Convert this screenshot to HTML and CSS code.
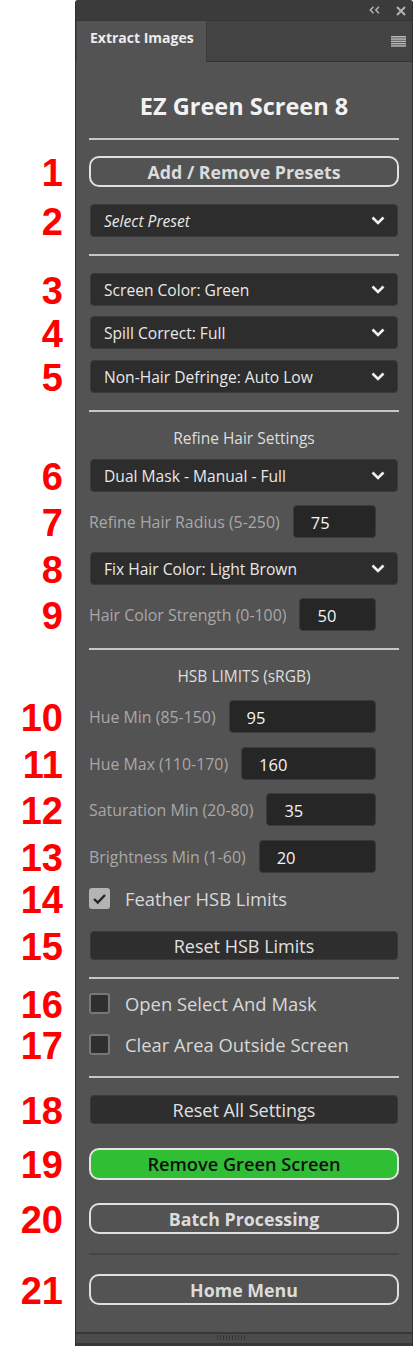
FILE: index.html
```html
<!DOCTYPE html>
<html>
<head>
<meta charset="utf-8">
<title>EZ Green Screen 8</title>
<link rel="stylesheet" href="styles.css">
</head>
<body>
<div class="panel">
  <div class="topbar">
    <svg class="collapse" width="11" height="8" viewBox="0 0 11 8"><path d="M4.5 0.8 L1.3 4 L4.5 7.2 M10 0.8 L6.8 4 L10 7.2" fill="none" stroke="#b4b4b4" stroke-width="1.5"/></svg>
    <svg class="close" width="10" height="10" viewBox="0 0 10 10"><path d="M1 1 L9 9 M9 1 L1 9" stroke="#b4b4b4" stroke-width="2"/></svg>
  </div>
  <div class="tabbar">
    <div class="tab">Extract Images</div>
    <div class="tabrest">
      <svg class="menu" width="15" height="11" viewBox="0 0 15 11"><rect x="0" y="0" width="15" height="1.5" fill="#b8b8b8"/><rect x="0" y="2.3" width="15" height="1.5" fill="#b8b8b8"/><rect x="0" y="4.6" width="15" height="1.5" fill="#b8b8b8"/><rect x="0" y="6.9" width="15" height="1.5" fill="#b8b8b8"/><rect x="0" y="9.2" width="15" height="1.5" fill="#b8b8b8"/></svg>
    </div>
  </div>
  <div class="content">
    <div class="title">EZ Green Screen 8</div>
    <div class="sep m17"></div>
    <div class="row m16"><span class="num">1</span><div class="pill">Add / Remove Presets</div></div>
    <div class="row m17"><span class="num">2</span><div class="dropdown italic"><span>Select Preset</span><svg class="chev" width="14" height="9" viewBox="0 0 14 9"><path d="M1.5 1.5 L7 7 L12.5 1.5" fill="none" stroke="#f2f2f2" stroke-width="2.6"/></svg></div></div>
    <div class="sep m17"></div>
    <div class="row m17"><span class="num">3</span><div class="dropdown"><span>Screen Color: Green</span><svg class="chev" width="14" height="9" viewBox="0 0 14 9"><path d="M1.5 1.5 L7 7 L12.5 1.5" fill="none" stroke="#f2f2f2" stroke-width="2.6"/></svg></div></div>
    <div class="row m10"><span class="num">4</span><div class="dropdown"><span>Spill Correct: Full</span><svg class="chev" width="14" height="9" viewBox="0 0 14 9"><path d="M1.5 1.5 L7 7 L12.5 1.5" fill="none" stroke="#f2f2f2" stroke-width="2.6"/></svg></div></div>
    <div class="row m11"><span class="num">5</span><div class="dropdown"><span>Non-Hair Defringe: Auto Low</span><svg class="chev" width="14" height="9" viewBox="0 0 14 9"><path d="M1.5 1.5 L7 7 L12.5 1.5" fill="none" stroke="#f2f2f2" stroke-width="2.6"/></svg></div></div>
    <div class="sep m17"></div>
    <div class="heading m16">Refine Hair Settings</div>
    <div class="row m11"><span class="num">6</span><div class="dropdown"><span>Dual Mask - Manual - Full</span><svg class="chev" width="14" height="9" viewBox="0 0 14 9"><path d="M1.5 1.5 L7 7 L12.5 1.5" fill="none" stroke="#f2f2f2" stroke-width="2.6"/></svg></div></div>
    <div class="row m13"><span class="num">7</span><span class="label">Refine Hair Radius (5-250)</span><div class="field">75</div></div>
    <div class="row m14"><span class="num">8</span><div class="dropdown"><span>Fix Hair Color: Light Brown</span><svg class="chev" width="14" height="9" viewBox="0 0 14 9"><path d="M1.5 1.5 L7 7 L12.5 1.5" fill="none" stroke="#f2f2f2" stroke-width="2.6"/></svg></div></div>
    <div class="row m13"><span class="num">9</span><span class="label">Hair Color Strength (0-100)</span><div class="field">50</div></div>
    <div class="sep m17"></div>
    <div class="heading m16">HSB LIMITS (sRGB)</div>
    <div class="row m14"><span class="num">10</span><span class="label">Hue Min (85-150)</span><div class="field">95</div></div>
    <div class="row m14"><span class="num">11</span><span class="label">Hue Max (110-170)</span><div class="field">160</div></div>
    <div class="row m13"><span class="num">12</span><span class="label">Saturation Min (20-80)</span><div class="field">35</div></div>
    <div class="row m14"><span class="num">13</span><span class="label">Brightness Min (1-60)</span><div class="field">20</div></div>
    <div class="row check-row m15"><span class="num">14</span><span class="box checked"><svg width="15" height="12" viewBox="0 0 15 12"><path d="M2 6 L5.8 9.6 L13 2" fill="none" stroke="#262626" stroke-width="2.4"/></svg></span><span class="check-label">Feather HSB Limits</span></div>
    <div class="row m22"><span class="num">15</span><div class="flat">Reset HSB Limits</div></div>
    <div class="sep m17"></div>
    <div class="row check-row m14"><span class="num">16</span><span class="box"></span><span class="check-label">Open Select And Mask</span></div>
    <div class="row check-row m20"><span class="num">17</span><span class="box"></span><span class="check-label">Clear Area Outside Screen</span></div>
    <div class="sep m21"></div>
    <div class="row m17"><span class="num">18</span><div class="flat">Reset All Settings</div></div>
    <div class="row m24"><span class="num">19</span><div class="pill green">Remove Green Screen</div></div>
    <div class="row m23"><span class="num">20</span><div class="pill">Batch Processing</div></div>
    <div class="sep dark m19"></div>
    <div class="row m19"><span class="num">21</span><div class="pill">Home Menu</div></div>
  </div>
  <div class="footer"><div class="grip"></div></div>
</div>
</body>
</html>
```

FILE: styles.css
```css
* { box-sizing: border-box; }
body {
  margin: 0;
  background: #ffffff;
  font-family: "Open Sans", "Noto Sans", sans-serif;
}
.panel {
  margin-left: 75px;
  width: 338px;
  height: 1346px;
  background: #535353;
  border-left: 1px solid #303030;
  border-right: 1px solid #303030;
  border-radius: 3px 3px 0 0;
  display: flex;
  flex-direction: column;
}
.topbar {
  height: 20px;
  flex: none;
  background: #3b3b3b;
  border-radius: 3px 3px 0 0;
  display: flex;
  justify-content: flex-end;
  align-items: center;
  gap: 16px;
  padding-right: 6px;
}
.close { margin-top: 2px; }
.tabbar {
  height: 42px;
  flex: none;
  display: flex;
  background: #434343;
  border-top: 1px solid #363636;
}
.tab {
  width: 130px;
  margin-left: 1px;
  background: #535353;
  color: #ececec;
  font-weight: 700;
  font-size: 14px;
  line-height: 18px;
  padding: 8px 0 0 13px;
  border-right: 1px solid #3a3a3a;
}
.tabrest {
  flex: 1;
  border-bottom: 1px solid #333333;
  display: flex;
  justify-content: flex-end;
  align-items: flex-start;
  padding: 15px 6px 0 0;
}
.content {
  flex: 1;
  padding: 0 13px;
  display: flex;
  flex-direction: column;
}
.title {
  margin-top: 29px;
  height: 30px;
  line-height: 30px;
  text-align: center;
  color: #f2f2f2;
  font-weight: 700;
  font-size: 23.5px;
}
.sep { height: 2px; background: #c6c6c6; flex: none; }
.sep.dark { background: #464646; }
.m10 { margin-top: 10px; }
.m11 { margin-top: 11px; }
.m13 { margin-top: 13px; }
.m14 { margin-top: 14px; }
.m15 { margin-top: 15px; }
.m16 { margin-top: 16px; }
.m17 { margin-top: 17px; }
.m19 { margin-top: 19px; }
.m20 { margin-top: 20px; }
.m21 { margin-top: 21px; }
.m22 { margin-top: 22px; }
.m23 { margin-top: 23px; }
.m24 { margin-top: 24px; }
.row {
  display: flex;
  align-items: center;
  flex: none;
}
.num {
  flex: none;
  width: 63px;
  height: 20px;
  margin-left: -89px;
  margin-right: 26px;
  text-align: right;
  color: #ff0000;
  font-family: "Liberation Sans", Arial, sans-serif;
  font-weight: 700;
  font-size: 38px;
  line-height: 22px;
}
.pill {
  flex: 1;
  height: 31px;
  border: 2px solid #e0e0e0;
  border-radius: 10px;
  color: #dcdcdc;
  font-weight: 700;
  font-size: 17.8px;
  display: flex;
  align-items: center;
  justify-content: center;
}
.pill.green {
  height: 32px;
  background: #30bf34;
  border-color: #e4e4e4;
  color: #111111;
  font-weight: 600;
  font-size: 18.2px;
}
.dropdown {
  flex: 1;
  margin: 0 1px;
  height: 33px;
  background: #2d2d2d;
  border: 1px solid #3a3a3a;
  border-radius: 4px;
  color: #e8e8e8;
  font-size: 15.6px;
  display: flex;
  align-items: center;
  justify-content: space-between;
  padding: 0 12px 0 13px;
}
.dropdown.italic { font-style: italic; }
.heading {
  height: 20px;
  line-height: 20px;
  text-align: center;
  color: #dedede;
  font-size: 15.5px;
  flex: none;
}
.label {
  flex: none;
  color: #a8a8a8;
  font-size: 15.9px;
}
.field {
  flex: 1;
  margin-left: 13px;
  margin-right: 23px;
  height: 33px;
  background: #262626;
  border: 1px solid #3a3a3a;
  border-radius: 4px;
  color: #f4f4f4;
  font-size: 16.5px;
  display: flex;
  align-items: center;
  padding: 2px 0 0 17px;
}
.check-row { height: 21px; }
.box {
  flex: none;
  width: 21px;
  height: 21px;
  border-radius: 3px;
  background: #2f2f2f;
  border: 2px solid #777777;
  display: flex;
  align-items: center;
  justify-content: center;
}
.box.checked {
  background: #b4b4b4;
  border-color: #b4b4b4;
}
.check-label {
  margin-left: 15px;
  color: #d8d8d8;
  font-size: 18.4px;
}
.flat {
  flex: 1;
  margin: 0 1px;
  height: 29px;
  background: #2e2e2e;
  border: 1px solid #3a3a3a;
  border-radius: 4px;
  color: #e0e0e0;
  font-size: 18px;
  font-weight: 500;
  display: flex;
  align-items: center;
  justify-content: center;
}
.footer {
  flex: none;
  height: 14px;
  background: #4c4c4c;
  border-top: 2px solid #383838;
  border-bottom: 3px solid #383838;
  display: flex;
  justify-content: center;
  padding-top: 1px;
}
.grip {
  width: 28px;
  height: 5px;
  background: repeating-linear-gradient(to right, #353535 0, #353535 1px, transparent 1px, transparent 3px);
  margin-left: -27px;
}
```
